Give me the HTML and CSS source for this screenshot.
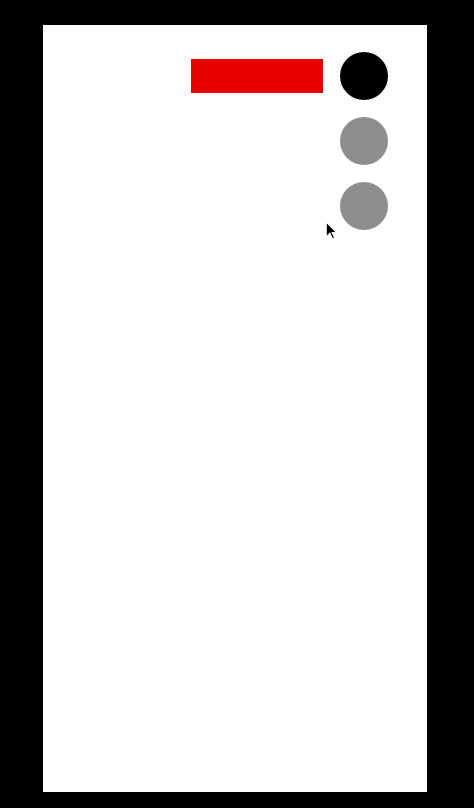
FILE: index.html
```html
<!DOCTYPE html>
<html>
<head>
<meta charset="utf-8">
<link rel="stylesheet" href="styles.css">
</head>
<body>
<div class="panel">
  <div class="bar"></div>
  <div class="dots">
    <div class="dot dot-dark"></div>
    <div class="dot dot-grey"></div>
    <div class="dot dot-grey"></div>
  </div>
  <svg class="cursor" width="13" height="19" viewBox="0 0 12 18">
    <path d="M1 1 L1 15 L4.5 11.6 L7 17 L9 16.1 L6.6 10.9 L11 10.9 Z" fill="#000" stroke="#fff" stroke-width="1"/>
  </svg>
</div>
</body>
</html>
```

FILE: styles.css
```css
html, body {
  margin: 0;
  padding: 0;
  background: #000;
  height: 100%;
  overflow: hidden;
}
.panel {
  position: relative;
  box-sizing: border-box;
  width: 384px;
  height: 767px;
  margin: 25px 0 0 43px;
  background: #fff;
  display: flex;
  justify-content: flex-end;
  align-items: flex-start;
  gap: 17px;
  padding: 27px 39px 0 0;
}
.bar {
  width: 132px;
  height: 34px;
  margin-top: 7px;
  background: #e60000;
}
.dots {
  display: flex;
  flex-direction: column;
  gap: 17px;
}
.dot {
  width: 48px;
  height: 48px;
  border-radius: 50%;
}
.dot-dark {
  background: #000;
}
.dot-grey {
  background: #8e8e8e;
}
.cursor {
  position: absolute;
  left: 282px;
  top: 196px;
}
```
